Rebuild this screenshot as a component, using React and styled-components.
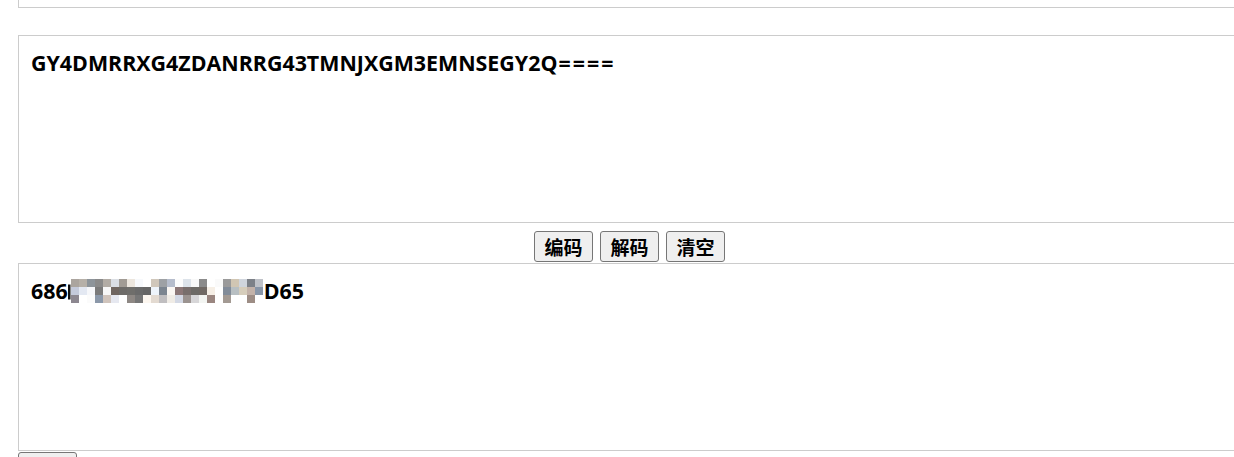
import React from 'react';
import styled, { createGlobalStyle } from 'styled-components';

const GlobalStyle = createGlobalStyle`
  html, body {
    margin: 0;
    padding: 0;
    background: #fff;
    overflow: hidden;
  }
  body {
    font-family: "Open Sans", "Noto Sans CJK SC", sans-serif;
  }
`;

// pixelated redaction over part of the decoded value
const mosaic = [
  ['#aba59f', '#b6b0a8', '#8d949a', '#8a8a8a', '#b2aca5', '#dadee4', '#a19b94', '#ece6de', '#f7f9fc', '#ffffff', '#d0c7bb', '#9ea1a5',
    '#b6bdcc', '#fcfcfc', '#dde3ea', '#f8f8f8', '#8b8b8b', '#ffffff', '#fafafa', '#9a9a9a', '#d1c6b3', '#d0d5dd', '#7d8188', '#bfc2c8'],
  ['#c4cadb', '#e3e8f2', '#f6f7fa', '#7a7a7a', '#f7f7f7', '#706660', '#6d6b68', '#6f6e6b', '#6a6a6a', '#666666', '#eef4fb', '#7c8590',
    '#fbf7f3', '#8c7777', '#786e6c', '#6d6a66', '#706964', '#f6efe6', '#ffffff', '#828c99', '#b8bfc2', '#d6cdbb', '#c3b2a9', '#8996a8'],
  ['#8c8790', '#ffffff', '#fbfbfb', '#8b98a9', '#d0c4bc', '#e6e8f0', '#ffffff', '#8e8884', '#767676', '#fdf7f0', '#e3dad1', '#c0bec0',
    '#f0ece6', '#d3d8e4', '#9b9390', '#d7d6d8', '#f3f5f2', '#9a8680', '#ffffff', '#a39a93', '#ffffff', '#ffffff', '#9d8d85', '#ffffff'],
];

const Page = styled.div`
  width: 1223px;
  padding-left: 18px;
  display: flex;
  flex-direction: column;
`;

const Panel = styled.div`
  box-sizing: border-box;
  flex: none;
  height: 188px;
  border: 1px solid #cccccc;
  padding: 12px 12px;
  font-size: 21.4px;
  font-weight: bold;
  color: #000;
  line-height: 29px;
  white-space: pre-wrap;
  word-break: break-all;
  margin-top: ${({ $top }) => $top || '0px'};
`;

const Padding = styled.span`
  letter-spacing: 2px;
  margin-left: 1px;
`;

const ButtonRow = styled.div`
  box-sizing: border-box;
  flex: none;
  height: 40px;
  display: flex;
  justify-content: center;
  align-items: flex-start;
  gap: 7px;
  padding-top: 8px;
`;

const Button = styled.button`
  box-sizing: border-box;
  width: 59px;
  height: 31px;
  padding: 0;
  border: 1px solid #767676;
  border-radius: 3px;
  background: #efefef;
  color: #000;
  font-family: "Noto Sans CJK SC", sans-serif;
  font-size: 19px;
  font-weight: bold;
  line-height: 1;
`;

const Footer = styled.div`
  padding-top: 1px;
`;

const Mosaic = styled.svg`
  display: inline-block;
  vertical-align: -4px;
`;

const Redacted = () => (
  <Mosaic width="196" height="24" viewBox="0 0 196 24">
    <rect x="0" y="5.5" width="2.5" height="15" fill="#111" />
    {mosaic.map((row, r) =>
      row.map((c, i) => (
        <rect key={`${r}-${i}`} x={3 + i * 8} y={r * 8} width="8" height="8" fill={c} />
      ))
    )}
  </Mosaic>
);

export default function App() {
  return (
    <>
      <GlobalStyle />
      <Page>
        <Panel $top="-180px" />
        <Panel $top="27px">
          GY4DMRRXG4ZDANRRG43TMNJXGM3EMNSEGY2Q<Padding>====</Padding>
        </Panel>
        <ButtonRow>
          <Button>编码</Button>
          <Button>解码</Button>
          <Button>清空</Button>
        </ButtonRow>
        <Panel>
          686<Redacted />D65
        </Panel>
        <Footer>
          <Button />
        </Footer>
      </Page>
    </>
  );
}
